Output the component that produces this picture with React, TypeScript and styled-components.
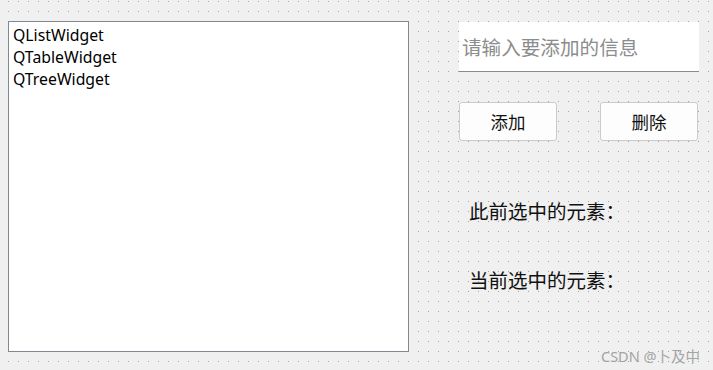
import React from 'react';
import styled, { createGlobalStyle } from 'styled-components';

const Global = createGlobalStyle`
  html, body {
    margin: 0;
    padding: 0;
  }
  body {
    width: 713px;
    height: 370px;
    overflow: hidden;
    background-color: #f0f0f0;
    background-image:
      linear-gradient(to right, #f0f0f0 9px, transparent 9px),
      linear-gradient(to bottom, #f0f0f0 9px, #a4a4a4 9px);
    background-size: 10px 10px;
    background-position: -1px 2px;
  }
`;

const items = ['QListWidget', 'QTableWidget', 'QTreeWidget'];

export default function App(): JSX.Element {
  return (
    <Page>
      <Global />
      <List>
        {items.map((t) => (
          <Item key={t}>{t}</Item>
        ))}
      </List>
      <Side>
        <Input placeholder="请输入要添加的信息" />
        <Buttons>
          <Button>添加</Button>
          <Button>删除</Button>
        </Buttons>
        <Label>此前选中的元素：</Label>
        <Label $gap={47}>当前选中的元素：</Label>
      </Side>
      <Mark>CSDN @卜及中</Mark>
    </Page>
  );
}

const Page = styled.div`
  position: relative;
  width: 713px;
  height: 370px;
  box-sizing: border-box;
  display: flex;
  align-items: flex-start;
  gap: 50px;
  padding: 21px 0 0 8px;
`;

const List = styled.div`
  width: 401px;
  height: 331px;
  box-sizing: border-box;
  background: #fff;
  border: 1px solid #828790;
  padding: 2px 0 0 4px;
  display: flex;
  flex-direction: column;
`;

const Item = styled.div`
  height: 22px;
  line-height: 22px;
  font-family: 'Noto Sans', 'Noto Sans CJK SC', sans-serif;
  font-size: 15.8px;
  color: #000;
`;

const Side = styled.div`
  width: 240px;
  display: flex;
  flex-direction: column;
  padding-top: 1px;
`;

const Input = styled.input`
  width: 240px;
  height: 50px;
  box-sizing: border-box;
  border: none;
  border-bottom: 1px solid #8a8a8a;
  background: #fff;
  outline: none;
  padding: 0 0 0 3px;
  font-family: 'Noto Sans CJK SC', sans-serif;
  font-size: 19.6px;
  &::placeholder {
    color: #8c8c8c;
  }
`;

const Buttons = styled.div`
  display: flex;
  justify-content: space-between;
  margin-top: 30px;
  padding-right: 1px;
`;

const Button = styled.button`
  width: 98px;
  height: 39px;
  box-sizing: border-box;
  background: #fdfdfd;
  border: 1px solid #cbcbcb;
  border-radius: 3px;
  font-family: 'Noto Sans CJK SC', sans-serif;
  font-size: 17.5px;
  color: #111;
  padding: 0;
`;

const Label = styled.div<{ $gap?: number }>`
  margin-top: ${(p) => p.$gap ?? 59}px;
  padding-left: 10px;
  height: 22px;
  line-height: 22px;
  font-family: 'Noto Sans CJK SC', serif;
  font-size: 19.5px;
  color: #111;
`;

const Mark = styled.div`
  position: absolute;
  left: 601px;
  top: 345px;
  font-family: 'Noto Sans', 'Noto Sans CJK SC', sans-serif;
  font-size: 14.5px;
  color: #a4a4a4;
`;
